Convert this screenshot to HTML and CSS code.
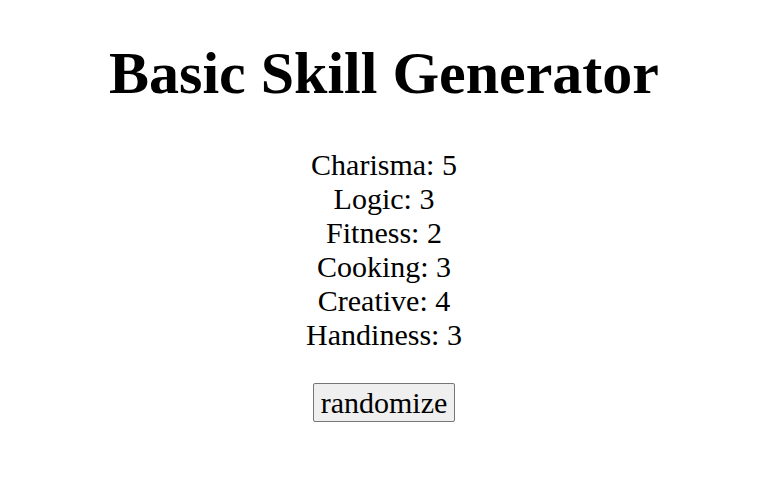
FILE: index.html
```html
<!DOCTYPE html>
<html>
<head>
<meta charset="utf-8">
<title>Basic Skill Generator</title>
<link rel="stylesheet" href="styles.css">
</head>
<body>
<main class="app">
  <h1 class="title">Basic Skill Generator</h1>
  <ul class="skills">
    <li>Charisma: 5</li>
    <li>Logic: 3</li>
    <li>Fitness: 2</li>
    <li>Cooking: 3</li>
    <li>Creative: 4</li>
    <li>Handiness: 3</li>
  </ul>
  <button class="randomize" type="button">randomize</button>
</main>
</body>
</html>
```

FILE: styles.css
```css
body {
  margin: 0;
  padding: 0 8px;
  font-family: "Liberation Serif", "Times New Roman", serif;
  font-size: 30px;
  color: #000;
  background: #fff;
}

.app {
  text-align: center;
}

.title {
  font-size: 60px;
  font-weight: bold;
  margin: 39px 0 40px;
}

.skills {
  list-style: none;
  margin: 0 0 31px;
  padding: 0;
}

.randomize {
  font-family: inherit;
  font-size: 30px;
  padding: 2px 7px 1px;
  border: 1px solid #767676;
  border-radius: 2px;
  background: #efefef;
  color: #000;
}
```
